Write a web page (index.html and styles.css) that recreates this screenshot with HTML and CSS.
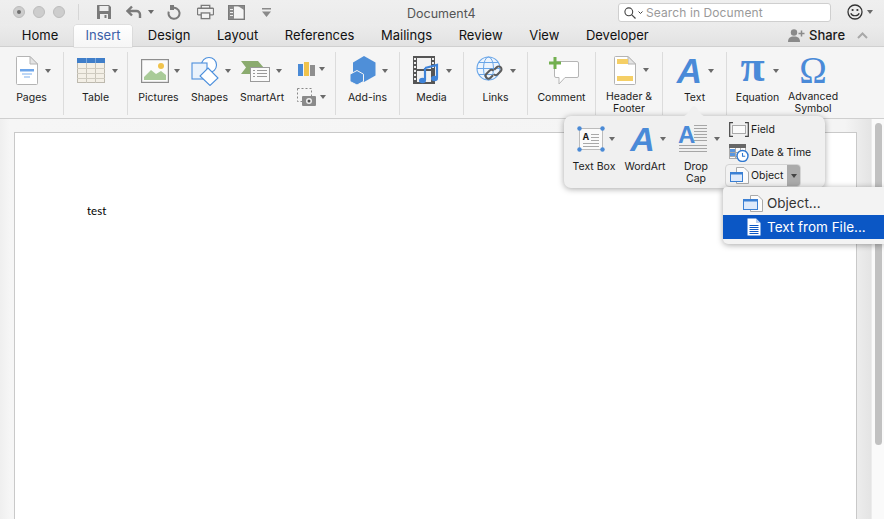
FILE: index.html
```html
<!DOCTYPE html>
<html lang="en">
<head>
    <meta charset="UTF-8">
    <title>Document4</title>
    <link rel="stylesheet" href="styles.css">
</head>
<body>
    <header class="titlebar">
        <div class="lights">
            <span class="light light-close"></span>
            <span class="light"></span>
            <span class="light"></span>
        </div>
        <div class="quick">
            <svg class="q-save" width="16" height="16" viewBox="0 0 16 16"><path d="M1 1.500a.5.5 0 0 1 .5-.5H13l2 2v11.500a.5.5 0 0 1-.5.5h-13a.5.5 0 0 1-.5-.5z" fill="#7a7a7a"/><rect x="3.500" y="2" width="9" height="5" fill="#ededed"/><rect x="4" y="10" width="8" height="5" fill="#ededed"/><rect x="8.500" y="11" width="2" height="3" fill="#7a7a7a"/></svg>
            <svg class="q-undo" width="16" height="14" viewBox="0 0 16 14"><path d="M6 1.500 1.500 6 6 10.500M2 6h8.500a3.500 3.500 0 0 1 3.500 3.500V13" fill="none" stroke="#7a7a7a" stroke-width="2.400"/></svg>
            <span class="caret q-caret"></span>
            <svg class="q-redo" width="14" height="15" viewBox="0 0 14 15"><path d="M5 3.200a5.500 5.500 0 1 1-3.200 3.400" fill="none" stroke="#7a7a7a" stroke-width="2"/><path d="M3 0h4v5H3z" fill="#7a7a7a"/></svg>
            <svg class="q-print" width="17" height="16" viewBox="0 0 18 16"><path d="M4.500 4V1h9v3M4.500 11H1.500a1 1 0 0 1-1-1V5.500a1 1 0 0 1 1-1.500h15a1 1 0 0 1 1 1.500V10a1 1 0 0 1-1 1h-3" fill="#f0f0f0" stroke="#7a7a7a" stroke-width="1.400"/><rect x="4.500" y="9" width="9" height="6" fill="#f4f4f4" stroke="#7a7a7a" stroke-width="1.400"/></svg>
            <svg class="q-view" width="17" height="15" viewBox="0 0 17 15"><rect x=".7" y=".7" width="15.600" height="13.600" fill="#f4f4f4" stroke="#7a7a7a" stroke-width="1.400"/><rect x="1" y="1" width="5" height="13" fill="#8a8a8a"/><path d="M2 4.500h3M2 7.500h3M2 10.500h3" stroke="#eee"/><path d="M10 1h6v4z" fill="#8a8a8a"/></svg>
            <svg class="q-more" width="11" height="9" viewBox="0 0 11 9"><path d="M1 0h9v1.500H1zM1 3.500h9L5.500 9z" fill="#8a8a8a"/></svg>
        </div>
        <div class="doc-title">Document4</div>
        <div class="search">
            <svg width="12" height="12" viewBox="0 0 12 12"><circle cx="4.800" cy="4.800" r="3.900" fill="none" stroke="#444" stroke-width="1.100"/><path d="m7.800 7.800 3.700 3.700" stroke="#444" stroke-width="1.200"/></svg>
            <svg class="search-chev" width="5" height="4" viewBox="0 0 5 4"><path d="m.5.500 2 2 2-2" fill="none" stroke="#444"/></svg>
            <span class="search-text">Search in Document</span>
        </div>
        <div class="smiley">
            <svg width="16" height="16" viewBox="0 0 16 16"><circle cx="8" cy="8" r="7" fill="none" stroke="#333" stroke-width="1.300"/><circle cx="5.600" cy="6" r="1.100" fill="#333"/><circle cx="10.400" cy="6" r="1.100" fill="#333"/><path d="M3.800 9.200c1.200 3.400 7.200 3.400 8.400 0" fill="none" stroke="#333" stroke-width="1.200"/></svg>
            <span class="caret"></span>
        </div>
    </header>

    <nav class="tabs">
        <span class="tab">Home</span>
        <span class="tab tab-active">Insert</span>
        <span class="tab">Design</span>
        <span class="tab">Layout</span>
        <span class="tab">References</span>
        <span class="tab">Mailings</span>
        <span class="tab">Review</span>
        <span class="tab">View</span>
        <span class="tab">Developer</span>
        <div class="share">
            <svg width="17" height="13" viewBox="0 0 17 13"><circle cx="6" cy="3.500" r="3.200" fill="#8a8a8a"/><path d="M0 13c0-4 2-5.500 6-5.500s6 1.500 6 5.500z" fill="#8a8a8a"/><path d="M13.500 1.500v6M10.500 4.500h6" stroke="#8a8a8a" stroke-width="1.500"/></svg>
            <span class="share-text">Share</span>
            <svg class="share-chev" width="11" height="7" viewBox="0 0 11 7"><path d="m1 6 4.500-4.500L10 6" fill="none" stroke="#a8a8a8" stroke-width="2"/></svg>
        </div>
    </nav>

    <section class="ribbon">
        <div class="group g-64">
            <div class="item w-full">
                <div class="ico">
                    <svg width="22" height="29" viewBox="0 0 22 29"><path d="M.5 1.500a1 1 0 0 1 1-1H14L21.500 8v19.500a1 1 0 0 1-1 1h-19a1 1 0 0 1-1-1z" fill="#fff" stroke="#b4b4b4"/><path d="M14 .5V8h7.500z" fill="#e4e4e4" stroke="#b4b4b4"/><path d="M4 13h14v2.500H4z" fill="#6ea6ea"/><path d="M6 17.500h10v1H6zM8 20.500h6v1H8z" fill="#7fb0ec"/></svg>
                    <span class="caret"></span>
                </div>
                <div class="label">Pages</div>
            </div>
        </div>
        <div class="group g-64">
            <div class="item w-full">
                <div class="ico">
                    <svg width="28" height="25" viewBox="0 0 28 25"><rect x=".5" y=".5" width="27" height="24" fill="#f3efe6" stroke="#bdb9ae"/><rect width="28" height="5" fill="#3f7ec9"/><path d="M9.500 0v25M18.500 0v25" stroke="#c9c5ba"/><path d="M9.500 0v5M18.500 0v5" stroke="#7ba8dd"/><path d="M0 10.500h28M0 15.500h28M0 20.500h28" stroke="#cfcbc0"/></svg>
                    <span class="caret"></span>
                </div>
                <div class="label">Table</div>
            </div>
        </div>
        <div class="group g-208">
            <div class="item w-51">
                <div class="ico ico-tight">
                    <svg width="28" height="24" viewBox="0 0 28 24"><rect x=".6" y=".6" width="26.800" height="22.800" fill="#fbfbfb" stroke="#8e8e8e" stroke-width="1.200"/><path d="M3 21v-3l7-7 5 4 5-3 5 4v5z" fill="#a9cb98"/><circle cx="20" cy="7" r="3" fill="#f0c34c"/></svg>
                    <span class="caret"></span>
                </div>
                <div class="label">Pictures</div>
            </div>
            <div class="item w-51">
                <div class="ico ico-s">
                    <svg width="28" height="30" viewBox="0 0 28 30"><circle cx="18" cy="9" r="7.500" fill="#fff" stroke="#4c8fdc" stroke-width="1.100"/><rect x="1" y="7" width="15" height="16" fill="#eaf2fb" stroke="#4c8fdc" stroke-width="1.100"/><path d="m17 12 10 10-8 7.500-10-9.500z" fill="#fff" stroke="#4c8fdc" stroke-width="1.100"/></svg>
                    <span class="caret"></span>
                </div>
                <div class="label">Shapes</div>
            </div>
            <div class="item w-54">
                <div class="ico ico-smartart">
                    <svg width="30" height="22" viewBox="0 0 30 22"><path d="M1 1h17l6 7-6 6H1l5-6.500z" fill="#8bab6f"/><rect x="10.500" y="7.500" width="19" height="14" fill="#fafafa" stroke="#9a9a9a"/><path d="M13 10.500h2M17 10.500h10M13 13.500h2M17 13.500h10M13 16.500h2M17 16.500h10" stroke="#999"/></svg>
                    <span class="caret"></span>
                </div>
                <div class="label">SmartArt</div>
            </div>
            <div class="small-col">
                <div class="small-row">
                    <svg width="17" height="14" viewBox="0 0 17 14"><rect y="2" width="5" height="12" fill="#4a8ad6"/><rect x="6" width="5" height="14" fill="#f0c34c"/><rect x="12" y="3" width="5" height="11" fill="#8e8e8e"/></svg>
                    <span class="caret"></span>
                </div>
                <div class="small-row">
                    <svg width="19" height="18" viewBox="0 0 19 18"><rect x=".5" y=".5" width="14" height="13" fill="none" stroke="#888" stroke-dasharray="2 2"/><rect x="5" y="8" width="14" height="10" rx="1" fill="#8a8a8a"/><circle cx="12" cy="13" r="3" fill="#eee"/><circle cx="12" cy="13" r="1.500" fill="#555"/></svg>
                    <span class="caret"></span>
                </div>
            </div>
        </div>
        <div class="group g-64">
            <div class="item w-full">
                <div class="ico ico-s">
                    <svg width="27" height="29" viewBox="0 0 27 29"><path d="M15 0l11.500 6.500v13L15 26l-11-6V6.500z" fill="#4f8fd8"/><path d="M8 14.500l6.500 3.700v7.300L8 29l-7-3.500v-7.300z" fill="#4f8fd8" stroke="#f5f5f5"/></svg>
                    <span class="caret"></span>
                </div>
                <div class="label">Add-ins</div>
            </div>
        </div>
        <div class="group g-64">
            <div class="item w-full">
                <div class="ico ico-s">
                    <svg width="27" height="29" viewBox="0 0 27 29"><rect x="0" y="0" width="22" height="28" fill="#555"/><rect x="4" y="2" width="14" height="11" fill="#f2f2f2"/><rect x="4" y="15" width="14" height="11" fill="#f2f2f2"/><path d="M1 3h2M1 7h2M1 11h2M1 15h2M1 19h2M1 23h2M19 3h2M19 7h2M19 11h2" stroke="#eee" stroke-width="2"/><path d="M12 12l12-3v13" fill="none" stroke="#3f83d8" stroke-width="2.200"/><path d="M12 12v12" stroke="#3f83d8" stroke-width="2.200"/><ellipse cx="9.500" cy="24.500" rx="3.500" ry="2.800" fill="#3f83d8"/><ellipse cx="21.500" cy="22.500" rx="3.500" ry="2.800" fill="#3f83d8"/></svg>
                    <span class="caret"></span>
                </div>
                <div class="label">Media</div>
            </div>
        </div>
        <div class="group g-64">
            <div class="item w-full">
                <div class="ico ico-links">
                    <svg width="29" height="29" viewBox="0 0 29 29"><circle cx="12.500" cy="12.500" r="11.500" fill="#eef5fd" stroke="#6aa6e8" stroke-width="1.100"/><ellipse cx="12.500" cy="12.500" rx="5" ry="11.500" fill="none" stroke="#6aa6e8"/><path d="M1 12.500h23M3 6.500h19M3 18.500h19" stroke="#6aa6e8"/><path d="M18.200 13.800l2.500-2.500a2.800 2.800 0 0 1 4 4l-3 3a2.800 2.800 0 0 1-4 0" fill="none" stroke="#5c5c5c" stroke-width="2"/><path d="M17 19.200l-2.500 2.500a2.800 2.800 0 0 1-4-4l3-3a2.800 2.800 0 0 1 4 0" fill="none" stroke="#5c5c5c" stroke-width="2"/></svg>
                    <span class="caret"></span>
                </div>
                <div class="label">Links</div>
            </div>
        </div>
        <div class="group g-68">
            <div class="item w-full">
                <div class="ico">
                    <svg width="30" height="28" viewBox="0 0 30 28"><path d="M7 4.500h21a1.500 1.500 0 0 1 1.500 1.500v13a1.500 1.500 0 0 1-1.500 1.500H16l-6 6.500v-6.500H7a1.500 1.500 0 0 1-1.500-1.500V6A1.500 1.500 0 0 1 7 4.500z" fill="#fff" stroke="#b5b5b5"/><path d="M4.500 0h3v4.500H12v3H7.500V12h-3V7.500H0v-3h4.500z" fill="#72b04f"/></svg>
                </div>
                <div class="label">Comment</div>
            </div>
        </div>
        <div class="group g-67">
            <div class="item w-full">
                <div class="ico">
                    <svg width="22" height="29" viewBox="0 0 22 29"><path d="M.5 1.500a1 1 0 0 1 1-1H14L21.500 8v19.500a1 1 0 0 1-1 1h-19a1 1 0 0 1-1-1z" fill="#fff" stroke="#b4b4b4"/><path d="M14 .5V8h7.500z" fill="#e4e4e4" stroke="#b4b4b4"/><rect x="3" y="3" width="11" height="5" fill="#f5cf66"/><rect x="3" y="20" width="16" height="5" fill="#f5cf66"/></svg>
                    <span class="caret"></span>
                </div>
                <div class="label">Header &amp;<br>Footer</div>
            </div>
        </div>
        <div class="group g-64">
            <div class="item w-full">
                <div class="ico ico-s">
                    <span class="glyph glyph-a">A</span>
                    <span class="caret"></span>
                </div>
                <div class="label">Text</div>
            </div>
        </div>
        <div class="group group-last">
            <div class="item w-61">
                <div class="ico ico-pi">
                    <span class="glyph glyph-pi">π</span>
                    <span class="caret"></span>
                </div>
                <div class="label">Equation</div>
            </div>
            <div class="item w-50">
                <div class="ico ico-none">
                    <span class="glyph glyph-omega">Ω</span>
                </div>
                <div class="label">Advanced<br>Symbol</div>
            </div>
        </div>
    </section>

    <main class="doc-area">
        <div class="page-wrap">
            <div class="page">test</div>
        </div>
        <div class="scroll"><div class="thumb"></div></div>
    </main>

    <svg class="pop-arrow" width="30" height="14" viewBox="0 0 30 14"><path d="M0 14c6 0 9-3 12-9q3-4 6 0c3 6 6 9 12 9z" fill="#f0f0f0"/></svg>
    <div class="popover">
        <div class="pop-item pop-textbox">
            <div class="pop-ico">
                <svg width="28" height="26" viewBox="0 0 28 26"><rect x="2.500" y="2.500" width="23" height="21" fill="#fafafa" stroke="#bcbcbc"/><path d="M14 8.500h8M14 11.500h8M14 14.500h8M6 17.500h16M6 20.500h16" stroke="#a8a8a8"/><circle cx="2.500" cy="2.500" r="2.200" fill="#4a8ad6"/><circle cx="25.500" cy="2.500" r="2.200" fill="#4a8ad6"/><circle cx="2.500" cy="23.500" r="2.200" fill="#4a8ad6"/><circle cx="25.500" cy="23.500" r="2.200" fill="#4a8ad6"/></svg>
                <span class="tb-a">A</span>
                <span class="caret"></span>
            </div>
            <div class="label">Text Box</div>
        </div>
        <div class="pop-item pop-wordart">
            <div class="pop-ico">
                <span class="glyph glyph-a">A</span>
                <span class="caret"></span>
            </div>
            <div class="label">WordArt</div>
        </div>
        <div class="pop-item pop-dropcap">
            <div class="pop-ico">
                <div class="dropcap">
                    <span class="dc-a">A</span>
                    <svg width="31" height="29" viewBox="0 0 31 29"><path d="M16 .5h13M16 3.500h13M16 6.500h13M16 9.500h13M16 12.500h13M16 15.500h13M1 20.500h28M1 23.500h28M1 26.500h28" stroke="#a6a6a6"/></svg>
                </div>
                <span class="caret"></span>
            </div>
            <div class="label">Drop<br>Cap</div>
        </div>
        <div class="pop-col">
            <div class="pop-row">
                <svg width="20" height="15" viewBox="0 0 20 15"><path d="M4 .7H.7v13.600H4M16 .7h3.300v13.600H16" fill="none" stroke="#444" stroke-width="1.200"/><rect x="3.500" y="3.500" width="13" height="8" fill="#fbfbfb" stroke="#aaa"/></svg>
                <span>Field</span>
            </div>
            <div class="pop-row">
                <svg width="20" height="18" viewBox="0 0 20 18"><rect x=".5" y=".5" width="16" height="14" fill="#fafafa" stroke="#aaa"/><rect width="17" height="4" fill="#666"/><path d="M6.500 4v11M11.500 4v11M0 8.500h17M0 12.500h17" stroke="#aaa"/><rect x="1" y="5" width="5" height="3" fill="#5a96de"/><rect x="1" y="9" width="5" height="3" fill="#5a96de"/><circle cx="13.500" cy="12" r="5.500" fill="#fff" stroke="#2f78d0" stroke-width="1.400"/><path d="M13.500 9v3.300h2.700" fill="none" stroke="#2f78d0" stroke-width="1.100"/></svg>
                <span>Date &amp; Time</span>
            </div>
            <div class="obj-btn">
                <div class="obj-main">
                    <svg width="19" height="17" viewBox="0 0 19 17"><path d="M6.500.5H14L18.500 5v11.500h-12z" fill="#fcfcfc" stroke="#aaa"/><rect x=".5" y="5.500" width="12" height="9" fill="#dfeafa" stroke="#3b80d4"/><rect x="0" y="5" width="13" height="2.500" fill="#3b80d4"/></svg>
                    <span>Object</span>
                </div>
                <div class="obj-drop"><span class="caret"></span></div>
            </div>
        </div>
    </div>

    <div class="menu">
        <div class="menu-row">
            <svg width="20" height="17" viewBox="0 0 20 17"><path d="M7.500.5H15L19.500 5v11.500h-12z" fill="#fcfcfc" stroke="#aaa"/><rect x=".5" y="4.500" width="14" height="10" fill="#dfeafa" stroke="#3b80d4"/><rect x="0" y="4" width="15" height="2.500" fill="#3b80d4"/></svg>
            <span>Object...</span>
        </div>
        <div class="menu-row menu-selected">
            <svg width="14" height="18" viewBox="0 0 14 18"><path d="M.5.500H9l4.500 4.500v12.500H.5z" fill="#fff"/><path d="M9 .5V5h4.500z" fill="#b8cdef"/><path d="M2.500 7.500h9M2.500 9.500h9M2.500 11.500h9M2.500 13.500h9M2.500 15.500h9" stroke="#0b57c5"/></svg>
            <span>Text from File...</span>
        </div>
    </div>
</body>
</html>
```

FILE: styles.css
```css
html, body {
    margin: 0;
    height: 100%;
    overflow: hidden;
}
body {
    display: flex;
    flex-direction: column;
    font-family: Inter, "Liberation Sans", sans-serif;
    color: #1a1a1a;
    background: #f4f4f4;
}
.caret {
    display: inline-block;
    width: 0;
    height: 0;
    border-left: 3.5px solid transparent;
    border-right: 3.5px solid transparent;
    border-top: 4px solid #6a6a6a;
}

/* title bar */
.titlebar {
    position: relative;
    height: 24px;
    flex: none;
    display: flex;
    align-items: center;
    background: linear-gradient(#efefef, #ebebeb);
}
.lights {
    display: flex;
    gap: 8px;
    padding-left: 13px;
    padding-right: 13px;
    height: 16px;
    align-items: center;
    border-right: 1px solid #d6d6d6;
}
.light {
    width: 10px;
    height: 10px;
    border-radius: 50%;
    background: #cdcdcd;
    border: 1px solid #bcbcbc;
    position: relative;
}
.light-close::after {
    content: "";
    position: absolute;
    left: 3px;
    top: 3px;
    width: 4px;
    height: 4px;
    border-radius: 50%;
    background: #6e6e6e;
}
.quick {
    display: flex;
    align-items: center;
    padding-left: 17px;
}
.q-undo { margin-left: 14px; }
.q-caret { margin-left: 6px; }
.q-redo { margin-left: 13px; }
.q-print { margin-left: 16px; }
.q-view { margin-left: 14px; }
.q-more { margin-left: 16px; }
.doc-title {
    position: absolute;
    left: 407px;
    top: 6px;
    font-size: 12.500px;
    line-height: 16px;
    color: #555;
}
.search {
    position: absolute;
    left: 618px;
    top: 3px;
    width: 213px;
    height: 19px;
    box-sizing: border-box;
    display: flex;
    align-items: center;
    padding-left: 5px;
    background: #fff;
    border: 1px solid #cfcfcf;
    border-radius: 3px;
}
.search-chev { margin-left: 2px; }
.search-text {
    margin-left: 3px;
    font-size: 12px;
    color: #9a9a9a;
    letter-spacing: .1px;
}
.smiley {
    position: absolute;
    left: 847px;
    top: 4px;
    display: flex;
    align-items: center;
    gap: 4px;
}

/* tabs */
.tabs {
    position: relative;
    height: 23px;
    flex: none;
    display: flex;
    align-items: flex-end;
    padding-left: 8.500px;
    background: linear-gradient(#ececec, #e2e2e2);
    box-sizing: border-box;
    border-bottom: 1px solid #d0d0d0;
}
.tab {
    padding: 0 13.300px;
    height: 21px;
    line-height: 21px;
    font-size: 13px;
    color: #111;
}
.tab-active {
    height: 22px;
    margin: 0 2.500px -1px;
    padding: 0 11.500px;
    background: linear-gradient(#fff, #f6f6f6);
    color: #3a5fa8;
    border-radius: 3px 3px 0 0;
    box-shadow: 0 0 0 .5px #d0d0d0;
}
.share {
    position: absolute;
    left: 788px;
    top: 2px;
    display: flex;
    align-items: center;
    height: 18px;
}
.share-text {
    margin-left: 4px;
    font-size: 13px;
    font-weight: 500;
}
.share-chev { margin-left: 12px; }

/* ribbon */
.ribbon {
    height: 72px;
    flex: none;
    box-sizing: border-box;
    display: flex;
    background: #f5f5f5;
    border-bottom: 1px solid #cfcfcf;
}
.group {
    display: flex;
    box-sizing: border-box;
    margin: 5px 0 3px;
    border-right: 1px solid #dcdcdc;
}
.group-last { border-right: none; }
.g-64 { width: 64px; }
.g-67 { width: 67px; }
.g-68 { width: 68px; }
.g-208 { width: 208px; padding-left: 5px; }
.item {
    display: flex;
    flex-direction: column;
    align-items: center;
}
.w-full { width: 100%; }
.w-50 { width: 50px; }
.w-51 { width: 51px; }
.w-54 { width: 54px; }
.w-61 { width: 61px; }
.ico {
    height: 40px;
    box-sizing: border-box;
    padding-bottom: 3px;
    display: flex;
    align-items: center;
    justify-content: center;
    gap: 7px;
    padding-left: 4px;
}
.ico-tight { gap: 5px; }
.ico-s { gap: 6px; padding-left: 2px; }
.ico-links { gap: 5px; padding-left: 0; }
.ico-none { padding-left: 0; }
.ico-smartart { gap: 6px; padding-left: 0; margin-left: -3px; }
.ico-pi { gap: 8px; padding-left: 4px; }
.label {
    font-size: 10.500px;
    line-height: 12px;
    text-align: center;
    white-space: nowrap;
    color: #1c1c1c;
}
.small-col {
    width: 46px;
    display: flex;
    flex-direction: column;
    align-items: center;
}
.small-row {
    display: flex;
    align-items: center;
    gap: 4px;
    height: 22px;
    margin-top: 6px;
    padding-right: 2px;
}
.glyph {
    display: block;
    line-height: 32px;
    color: #4a8ad8;
}
.glyph-a {
    font-family: "Liberation Sans", sans-serif;
    font-size: 35px;
    font-weight: 700;
    font-style: italic;
}
.glyph-pi {
    font-family: "Liberation Serif", serif;
    font-size: 44px;
    font-weight: 700;
    margin-top: -7px;
}
.glyph-omega {
    font-family: "Liberation Serif", serif;
    font-size: 37px;
    margin-top: 2px;
}

/* document */
.doc-area {
    flex: 1;
    min-height: 0;
    display: flex;
}
.page-wrap {
    flex: 1;
    padding: 13px 14px 0;
    background: linear-gradient(90deg, #efefef, #f6f6f6 10px, #f4f4f4 97%, #e4e4e4);
    overflow: hidden;
}
.page {
    height: 100%;
    box-sizing: border-box;
    padding: 70px 72px 0;
    background: #fff;
    border: 1px solid #c9c9c9;
    border-bottom: none;
    font-family: Lato, sans-serif;
    font-size: 11.500px;
    line-height: 16px;
    color: #000;
}
.scroll {
    width: 13px;
    flex: none;
    box-sizing: border-box;
    padding: 4px 2px 0 3px;
    background: #fafafa;
    border-left: 1px solid #ececec;
}
.thumb {
    height: 322px;
    border-radius: 4px;
    background: #c1c1c1;
}

/* Text popover */
.pop-arrow {
    position: absolute;
    left: 679px;
    top: 103px;
    z-index: 3;
}
.popover {
    position: absolute;
    left: 564px;
    top: 116px;
    width: 261px;
    height: 72px;
    display: flex;
    z-index: 2;
    background: #f0f0f0;
    border-radius: 7px;
    box-shadow: 0 1px 6px rgba(0,0,0,.35);
}
.pop-item {
    display: flex;
    flex-direction: column;
    align-items: center;
    padding-top: 6px;
}
.pop-textbox { width: 60px; }
.pop-wordart { width: 42px; }
.pop-dropcap { width: 60px; }
.pop-ico {
    position: relative;
    height: 34px;
    display: flex;
    align-items: center;
    justify-content: center;
    gap: 5px;
    padding-left: 6px;
}
.pop-ico + .label { margin-top: 5px; }
.pop-textbox .pop-ico { gap: 4px; padding-left: 3px; }
.pop-wordart .glyph-a { font-size: 34px; }
.tb-a {
    position: absolute;
    left: 9px;
    top: 9px;
    font-size: 9px;
    font-weight: 700;
    line-height: 11px;
}
.dropcap {
    position: relative;
    width: 31px;
    height: 29px;
}
.dropcap svg { display: block; }
.dc-a {
    position: absolute;
    left: 0;
    top: -2px;
    font-family: "Liberation Sans", sans-serif;
    font-size: 24px;
    font-weight: 700;
    line-height: 24px;
    color: #4a8ad8;
}
.pop-col {
    padding-top: 2px;
    display: flex;
    flex-direction: column;
}
.pop-row {
    height: 23px;
    display: flex;
    align-items: center;
    gap: 2px;
    padding-left: 3px;
    font-size: 10.500px;
}
.obj-btn {
    height: 23px;
    width: 76px;
    margin-left: -1px;
    display: flex;
    box-sizing: border-box;
    background: #f2f2f2;
    border: 1px solid #d4d4d4;
    border-radius: 4px;
    font-size: 10.500px;
}
.obj-main {
    flex: 1;
    display: flex;
    align-items: center;
    gap: 2px;
    padding-left: 4px;
}
.obj-drop {
    width: 13px;
    display: flex;
    align-items: center;
    justify-content: center;
    background: #ababab;
    border-radius: 0 3px 3px 0;
}
.obj-drop .caret {
    border-left-width: 3px;
    border-right-width: 3px;
    border-top-color: #444;
}

/* dropdown menu */
.menu {
    position: absolute;
    left: 723px;
    top: 187px;
    width: 161px;
    height: 57px;
    box-sizing: border-box;
    padding-top: 4px;
    z-index: 4;
    background: #f3f3f3;
    border-radius: 4px 0 0 5px;
    box-shadow: 0 1px 6px rgba(0,0,0,.35);
    font-size: 13.500px;
    color: #333;
}
.menu-row {
    height: 24px;
    display: flex;
    align-items: center;
    gap: 4px;
    padding-left: 20px;
}
.menu-selected {
    gap: 6px;
    padding-left: 24px;
    background: #0b57c5;
    color: #fff;
}
```
